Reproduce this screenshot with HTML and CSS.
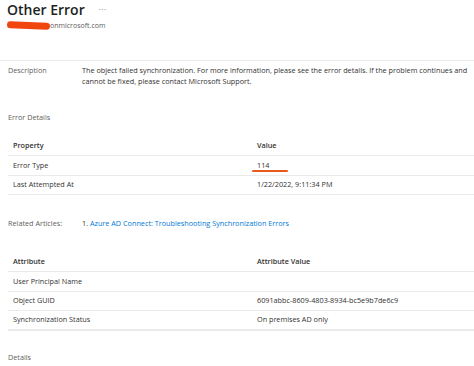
FILE: index.html
```html
<!DOCTYPE html>
<html>
<head>
<meta charset="utf-8">
<link rel="stylesheet" href="styles.css">
</head>
<body>
<header class="head">
  <div class="title-row">
    <h1 class="title">Other Error</h1>
    <span class="more">···</span>
  </div>
  <div class="sub"><span class="redact"></span><span class="domain">onmicrosoft.com</span></div>
</header>
<div class="rule"></div>
<main class="content">
  <div class="pair desc">
    <div class="label">Description</div>
    <div class="text">The object failed synchronization. For more information, please see the error details. If the problem continues and cannot be fixed, please contact Microsoft Support.</div>
  </div>
  <div class="section-title">Error Details</div>
  <div class="table">
    <div class="row hdr"><div class="c1">Property</div><div class="c2">Value</div></div>
    <div class="row"><div class="c1">Error Type</div><div class="c2"><span class="mark">114</span></div></div>
    <div class="row"><div class="c1">Last Attempted At</div><div class="c2">1/22/2022, 9:11:34 PM</div></div>
  </div>
  <div class="pair related">
    <div class="label">Related Articles:</div>
    <div class="text">1. <a class="link" href="#">Azure AD Connect: Troubleshooting Synchronization Errors</a></div>
  </div>
  <div class="table attrs">
    <div class="row hdr"><div class="c1">Attribute</div><div class="c2">Attribute Value</div></div>
    <div class="row"><div class="c1">User Principal Name</div><div class="c2"></div></div>
    <div class="row"><div class="c1">Object GUID</div><div class="c2">6091abbc-8609-4803-8934-bc5e9b7de6c9</div></div>
    <div class="row last"><div class="c1">Synchronization Status</div><div class="c2">On premises AD only</div></div>
  </div>
  <div class="section-title details">Details</div>
</main>
</body>
</html>
```
FILE: styles.css
```css
* { box-sizing: border-box; }
body {
  margin: 0;
  background: #ffffff;
  font-family: "Open Sans", "Noto Sans", sans-serif;
  color: #323130;
  font-size: 7.25px;
  line-height: 11px;
  overflow: hidden;
}
.head { padding: 0 8px 0 7px; }
.title-row { display: flex; align-items: center; height: 20px; }
.title {
  margin: 0;
  font-size: 14px;
  font-weight: 600;
  color: #201f1e;
  line-height: 20px;
}
.more { margin-left: 14px; font-size: 8px; color: #605e5c; position: relative; top: -2px; letter-spacing: 0.5px; }
.sub { display: flex; align-items: center; height: 10px; margin-top: 0; }
.redact {
  display: inline-block; width: 43px; height: 7px; border-radius: 4px;
  background: #f0450f; transform: rotate(2deg); margin-left: 0;
}
.domain { font-size: 7px; color: #605e5c; }
.rule { height: 1px; background: #edebe9; margin-top: 30px; }
.content { padding: 0 0 0 8px; }
.pair { display: flex; }
.label { width: 74px; flex: none; color: #605e5c; }
.text { flex: 1; color: #323130; }
.desc { margin-top: 4px; }
.section-title { margin-top: 25px; color: #605e5c; }
.table { margin-top: 12px; }
.row { display: flex; height: 19.5px; align-items: center; border-bottom: 1px solid #edebe9; }
.row .c1 { width: 244px; padding-left: 5px; flex: none; color: #323130; }
.row .c2 { padding-left: 5px; flex: 1; color: #323130; }
.hdr { font-weight: 600; height: 21px; }
.mark { display: inline-block; position: relative; }
.mark::after {
  content: ""; position: absolute; left: -5px; top: 10px; width: 36px; height: 2px;
  background: #e8591a; border-radius: 2px;
}
.related { margin-top: 23px; }
.link { color: #0078d4; text-decoration: none; }
.attrs { margin-top: 22px; }
.last { border-bottom-width: 2px; }
.details { margin-top: 21px; }
```
